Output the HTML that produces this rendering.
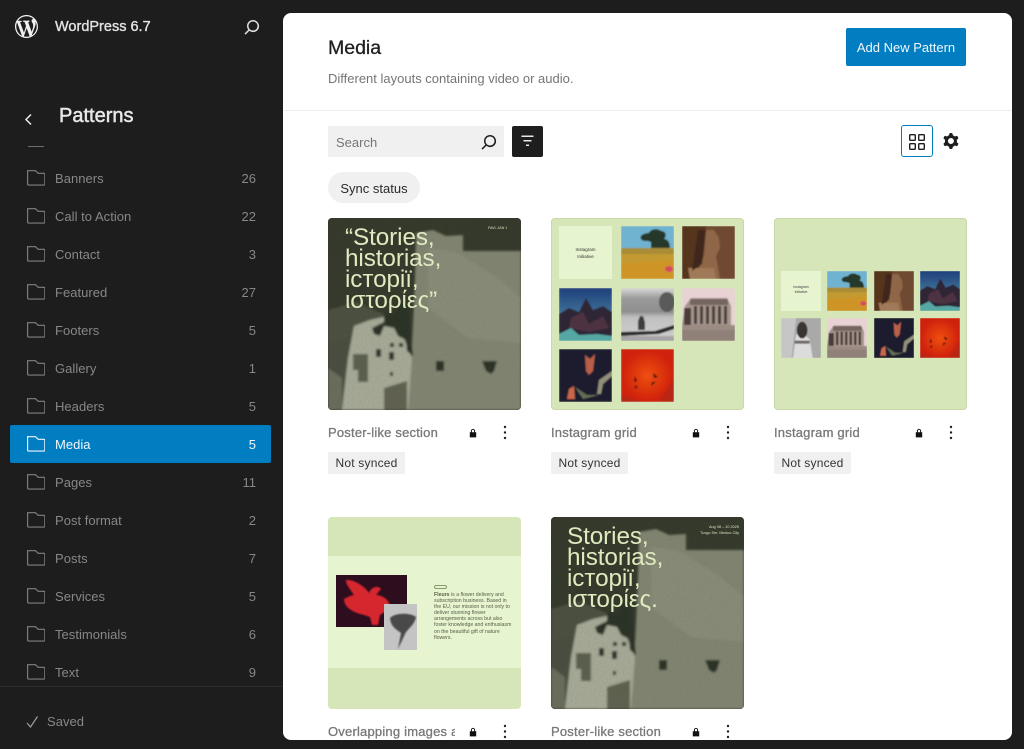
<!DOCTYPE html>
<html lang="en"><head><meta charset="utf-8"><title>Patterns</title>
<style>
html,body{margin:0;padding:0;width:1024px;height:749px;overflow:hidden;background:#1d1d1d;font-family:"Liberation Sans",sans-serif}
div,span,svg{position:absolute;display:block}
.t{white-space:nowrap;line-height:16px}
.side{font-size:13px;color:#878787;letter-spacing:.03px}
.cnt{font-size:13px;color:#878787;right:768px;text-align:right}
.lab{font-size:13px;color:#787878;letter-spacing:.2px;-webkit-text-stroke:.3px #787878;white-space:nowrap;line-height:16px}
.badge{background:#f0f0f0;height:22px;width:77px;border-radius:2px;font-size:12px;line-height:23px;color:#333;text-align:center;letter-spacing:.2px}
.card{border-radius:4px;overflow:hidden;width:192.5px;height:192px}
.ph{color:#dfeabf;font-size:24.3px;line-height:21px;letter-spacing:-.1px;white-space:nowrap}
</style></head><body>
<svg width="0" height="0" style="position:absolute">
<defs>
<filter id="b" x="-10%" y="-10%" width="120%" height="120%"><feGaussianBlur stdDeviation=".8"/></filter>
<filter id="bp" x="-5%" y="-5%" width="110%" height="110%"><feGaussianBlur stdDeviation="1.100"/></filter>
<filter id="nz" x="0" y="0" width="100%" height="100%"><feTurbulence type="fractalNoise" baseFrequency=".5" numOctaves="2" seed="4"/><feColorMatrix type="matrix" values="0 0 0 0 .12  0 0 0 0 .13  0 0 0 0 .09  0 0 0 2 -.9"/></filter>
<g id="fo"><path d="M.7.7h9l3 2.900h6.600a1 1 0 0 1 1 1V16a1 1 0 0 1-1 1H1.700a1 1 0 0 1-1-1z" fill="none" stroke="currentColor" stroke-width="1.300"/></g>
<g id="lk"><path d="M1 5h8v6.500H1z M2.400 5V3.400a2.600 2.600 0 0 1 5.200 0V5H6.400V3.400a1.400 1.400 0 0 0-2.800 0V5z" fill="#111"/></g>
<g id="dt" fill="#222"><circle cx="2" cy="2" r="1.200"/><circle cx="2" cy="7.500" r="1.200"/><circle cx="2" cy="13" r="1.200"/></g>
<symbol id="poster" viewBox="0 0 193 192">
<rect width="193" height="192" fill="#34392b"/>
<g filter="url(#bp)">
<path d="M0 92 28 84 60 98 60 125 0 125z" fill="#4b5040"/>
<path d="M88 15 105 12 118 18 135 17 135 33 193 33 193 192 78 192 84 130 87 60z" fill="#7f8370"/>
<path d="M100 30 128 34 170 60 193 80 193 125 140 120 100 90z" fill="#868a76"/>
<path d="M0 125 24 118 24 192 0 192z" fill="#4a4e3f"/>
<path d="M26 108 42 102 60 98 60 108 72 110 78 125 84 140 80 192 14 192 20 140z" fill="#a4a895"/>
<path d="M44 110 56 104 56 96 68 96 68 88 80 84 85 138 79 133 78 122 70 118 66 110 56 108 52 118 46 116z" fill="#2c3025"/>
<path d="M25 136h15v28H30v-12h-5z" fill="#5a5e4d"/>
<path d="M48 131h5v8h-5zM61 134h5v8h-5zM62 125h4v4h-4zM71 125h4v4h-4zM62 154h3v4h-3z" fill="#2f3328"/>
<path d="M56 170 79 163 79 192 56 192z" fill="#5e6150"/>
<path d="M108 143h8v10h-8zM154 143h15l-3 10-3 3-5-3z" fill="#2c3025"/>
<path d="M0 150 14 160 14 192 0 192z" fill="#686c5a"/>
</g>
<rect width="193" height="192" filter="url(#nz)" opacity=".14"/>
</symbol>
<symbol id="tree" viewBox="0 0 53 53"><g filter="url(#b)"><rect width="53" height="24" fill="#70b3d0"/><rect y="22" width="53" height="31" fill="#c39a33"/><path d="M0 22H53V28H0z" fill="#a98c34"/><path d="M0 38 53 34V53H0z" fill="#cf9425"/><path d="M20 13c-2-4 4-6 8-6 1-4 9-5 12-2 5 0 6 5 3 8 4 0 6 4 6 9H30v-6l-3-1c-3 0-6 0-7-2z" fill="#26392c"/><ellipse cx="48" cy="43" rx="4" ry="3" fill="#d64a60"/></g></symbol>
<symbol id="face" viewBox="0 0 53 53"><g filter="url(#b)"><rect width="53" height="53" fill="#6f4a30"/><path d="M0 0H24L18 53H0z" fill="#54351f"/><path d="M24 4 32 4 37 12 38 22 34 30 38 53H12L22 30z" fill="#8f6647"/><path d="M6 42 32 42 34 53H8z" fill="#a07a58"/><path d="M16 4 24 4 20 38 10 45z" fill="#40281a"/></g></symbol>
<symbol id="coral" viewBox="0 0 53 53"><defs><linearGradient id="cg" x1="0" y1="0" x2="0" y2="1"><stop offset="0" stop-color="#1f3f7b"/><stop offset=".5" stop-color="#3f7298"/></linearGradient></defs><g filter="url(#b)"><rect width="53" height="53" fill="url(#cg)"/><path d="M0 26 10 20 20 24 27 10 34 22 44 18 53 24V53H0z" fill="#2f2535"/><path d="M12 30 24 24 30 36 44 28 50 40 30 44 10 40z" fill="#4d3043"/><path d="M0 53V46L12 40 20 47 38 46 53 48V53z" fill="#54a7a4"/></g></symbol>
<symbol id="boat" viewBox="0 0 53 53"><defs><linearGradient id="bg" x1="0" y1="0" x2="0" y2="1"><stop offset="0" stop-color="#d8d8d8"/><stop offset=".2" stop-color="#9a9a9a"/><stop offset=".45" stop-color="#8e8e8e"/><stop offset=".55" stop-color="#c0c0c0"/><stop offset="1" stop-color="#cfcfcf"/></linearGradient></defs><g filter="url(#b)"><rect width="53" height="53" fill="url(#bg)"/><ellipse cx="46" cy="14" rx="8" ry="10" fill="#5a5a5a"/><path d="M0 44 34 43 53 37V41L38 46 0 48z" fill="#2c2c2c"/><path d="M17 42V33l2-5h3l2 6v8z" fill="#3c3c3c"/><rect y="48" width="53" height="5" fill="#a5a5a5"/></g></symbol>
<symbol id="temple" viewBox="0 0 53 53"><g filter="url(#b)"><rect width="53" height="53" fill="#e8d2d4"/><rect y="37" width="53" height="16" fill="#9c8b83"/><path d="M0 36 3 18 9 10H45L49 18V37H0z" fill="#a5948c"/><path d="M8 11H46V17H8z" fill="#75655f"/><path d="M2 20H9V37H2zM12 18h3V36h-3zM18 18h3V36h-3zM24 18h3V36h-3zM30 18h3V36h-3zM36 18h3V36h-3zM42 18h3V36h-3z" fill="#4a3e3a"/><path d="M0 42H53V53H0z" fill="#8f8078"/></g></symbol>
<symbol id="flower" viewBox="0 0 53 53"><g filter="url(#b)"><rect width="53" height="53" fill="#1d1a2e"/><path d="M26 6 31 10 36 5 34 22 30 26 27 22z" fill="#b85f48"/><path d="M40 31 53 22V27L44 35 42 45 38 45z" fill="#928f78"/><path d="M8 50 10 40 15 37 16 50z" fill="#c9674a"/><path d="M16 38 28 46 40 46 24 50z" fill="#626d52"/></g></symbol>
<symbol id="red" viewBox="0 0 53 53"><defs><radialGradient id="rg"><stop offset="0" stop-color="#ee4f12"/><stop offset="1" stop-color="#cf200e"/></radialGradient></defs><g filter="url(#b)"><rect width="53" height="53" fill="url(#rg)"/><path d="M14 27l2 5-3 1zM32 24l5 4-4 1zM14 36l3 2-3 2zM35 33l-5 4 1-4z" fill="#3a1210"/><path d="M38 53 53 30V53zM0 45 20 53H0z" fill="#b92512"/></g></symbol>
<symbol id="woman" viewBox="0 0 53 53"><g filter="url(#b)"><rect width="53" height="53" fill="#a9a9a9"/><path d="M0 0H20L14 53H0z" fill="#c6c6c6"/><path d="M16 53 20 22 28 20 38 28 42 53z" fill="#dcdcdc"/><ellipse cx="28" cy="16" rx="7" ry="11" fill="#3b3531"/><path d="M18 30h20v4H18z" fill="#6e6a66"/></g></symbol>
</defs></svg>

<!-- sidebar -->
<svg style="left:15px;top:15px" width="23" height="23" viewBox="0 0 20 20"><path fill="#f0f0f0" d="M20 10c0-5.510-4.490-10-10-10C4.480 0 0 4.490 0 10c0 5.520 4.480 10 10 10 5.510 0 10-4.480 10-10zM7.780 15.370L4.370 6.220c.55-.02 1.170-.08 1.170-.08.5-.06.44-1.130-.06-1.110 0 0-1.450.11-2.370.11-.18 0-.37 0-.58-.01C4.120 2.690 6.870 1.110 10 1.110c2.330 0 4.450.87 6.050 2.340-.68-.11-1.650.39-1.650 1.580 0 .74.45 1.360.9 2.100.35.61.55 1.360.55 2.460 0 1.490-1.400 5-1.400 5l-3.030-8.370c.54-.02.82-.17.82-.17.5-.05.44-1.250-.06-1.220 0 0-1.440.12-2.380.12-.87 0-2.330-.12-2.330-.12-.5-.03-.56 1.200-.06 1.220l.92.08 1.260 3.410zM17.410 10c.24-.64.74-1.870.43-4.250.7 1.290 1.050 2.710 1.050 4.250 0 3.290-1.730 6.240-4.400 7.780.97-2.590 1.940-5.200 2.920-7.780zM6.100 18.090C3.120 16.650 1.110 13.530 1.110 10c0-1.300.23-2.480.72-3.590C3.250 10.300 4.670 14.200 6.100 18.090zm4.030-6.630l2.580 6.980c-.86.29-1.760.45-2.710.45-.79 0-1.570-.11-2.290-.33.81-2.380 1.620-4.740 2.420-7.100z"/></svg>
<div class="t" style="left:55px;top:19px;font-size:14.500px;color:#e4e4e4;-webkit-text-stroke:.35px #e4e4e4">WordPress 6.7</div>
<svg style="left:240px;top:15px" width="24" height="24" viewBox="0 0 24 24"><path fill="#e0e0e0" d="M13 5c-3.300 0-6 2.700-6 6 0 1.400.5 2.700 1.300 3.700l-3.800 3.800 1.100 1.100 3.800-3.800c1 .8 2.300 1.300 3.700 1.300 3.300 0 6-2.700 6-6S16.300 5 13 5zm0 10.500c-2.500 0-4.500-2-4.500-4.500s2-4.500 4.500-4.500 4.500 2 4.500 4.500-2 4.500-4.500 4.500z"/></svg>
<svg style="left:22px;top:111px" width="12" height="16" viewBox="0 0 12 16"><path d="M9 3.500 4 8.500l5 5" fill="none" stroke="#e8e8e8" stroke-width="1.500"/></svg>
<div class="t" style="left:59px;top:105px;font-size:20px;line-height:22px;color:#e8e8e8;-webkit-text-stroke:.5px #e8e8e8">Patterns</div>
<div style="left:28px;top:146px;width:16px;height:1px;background:#6f6f6f"></div>

<svg style="left:27px;top:170px;color:#808080" width="18" height="16" viewBox="0 0 20.500 18"><use href="#fo"/></svg><div class="t side" style="left:55px;top:171px">Banners</div><div class="t cnt" style="top:171px">26</div>
<svg style="left:27px;top:208px;color:#808080" width="18" height="16" viewBox="0 0 20.500 18"><use href="#fo"/></svg><div class="t side" style="left:55px;top:209px">Call to Action</div><div class="t cnt" style="top:209px">22</div>
<svg style="left:27px;top:246px;color:#808080" width="18" height="16" viewBox="0 0 20.500 18"><use href="#fo"/></svg><div class="t side" style="left:55px;top:247px">Contact</div><div class="t cnt" style="top:247px">3</div>
<svg style="left:27px;top:284px;color:#808080" width="18" height="16" viewBox="0 0 20.500 18"><use href="#fo"/></svg><div class="t side" style="left:55px;top:285px">Featured</div><div class="t cnt" style="top:285px">27</div>
<svg style="left:27px;top:322px;color:#808080" width="18" height="16" viewBox="0 0 20.500 18"><use href="#fo"/></svg><div class="t side" style="left:55px;top:323px">Footers</div><div class="t cnt" style="top:323px">5</div>
<svg style="left:27px;top:360px;color:#808080" width="18" height="16" viewBox="0 0 20.500 18"><use href="#fo"/></svg><div class="t side" style="left:55px;top:361px">Gallery</div><div class="t cnt" style="top:361px">1</div>
<svg style="left:27px;top:398px;color:#808080" width="18" height="16" viewBox="0 0 20.500 18"><use href="#fo"/></svg><div class="t side" style="left:55px;top:399px">Headers</div><div class="t cnt" style="top:399px">5</div>
<div style="left:10px;top:425px;width:261px;height:38px;background:#017dc2;border-radius:2px"></div>
<svg style="left:27px;top:436px;color:#f2f8fc" width="18" height="16" viewBox="0 0 20.500 18"><use href="#fo"/></svg><div class="t side" style="left:55px;top:437px;color:#f2f8fc">Media</div><div class="t cnt" style="top:437px;color:#f2f8fc">5</div>
<svg style="left:27px;top:474px;color:#808080" width="18" height="16" viewBox="0 0 20.500 18"><use href="#fo"/></svg><div class="t side" style="left:55px;top:475px">Pages</div><div class="t cnt" style="top:475px">11</div>
<svg style="left:27px;top:512px;color:#808080" width="18" height="16" viewBox="0 0 20.500 18"><use href="#fo"/></svg><div class="t side" style="left:55px;top:513px">Post format</div><div class="t cnt" style="top:513px">2</div>
<svg style="left:27px;top:550px;color:#808080" width="18" height="16" viewBox="0 0 20.500 18"><use href="#fo"/></svg><div class="t side" style="left:55px;top:551px">Posts</div><div class="t cnt" style="top:551px">7</div>
<svg style="left:27px;top:588px;color:#808080" width="18" height="16" viewBox="0 0 20.500 18"><use href="#fo"/></svg><div class="t side" style="left:55px;top:589px">Services</div><div class="t cnt" style="top:589px">5</div>
<svg style="left:27px;top:626px;color:#808080" width="18" height="16" viewBox="0 0 20.500 18"><use href="#fo"/></svg><div class="t side" style="left:55px;top:627px">Testimonials</div><div class="t cnt" style="top:627px">6</div>
<svg style="left:27px;top:664px;color:#808080" width="18" height="16" viewBox="0 0 20.500 18"><use href="#fo"/></svg><div class="t side" style="left:55px;top:665px">Text</div><div class="t cnt" style="top:665px">9</div>
<div style="left:0;top:686px;width:283px;height:1px;background:#2c2c2c"></div>
<svg style="left:26px;top:715px" width="13" height="14" viewBox="0 0 13 14"><path d="M1 8 4.500 12 11.500 1.500" fill="none" stroke="#a0a0a0" stroke-width="1.200"/></svg>
<div class="t side" style="left:47px;top:714px">Saved</div>

<!-- panel -->
<div style="left:283px;top:13px;width:729px;height:727px;background:#fff;border-radius:8px;overflow:hidden"></div>
<div class="t" style="left:328px;top:37px;font-size:19.500px;line-height:22px;color:#1e1e1e;-webkit-text-stroke:.3px #1e1e1e">Media</div>
<div class="t" style="left:328px;top:71px;font-size:13px;color:#757575">Different layouts containing video or audio.</div>
<div class="t" style="left:846px;top:28px;width:120px;height:38px;line-height:40px;background:#017dc2;border-radius:2px;color:#f2f8fc;font-size:13px;text-align:center;overflow:hidden">Add New Pattern</div>
<div style="left:283px;top:110px;width:729px;height:1px;background:#eeeeee"></div>

<div class="t" style="left:328px;top:126px;width:176px;height:31px;background:#f0f0f0;border-radius:2px;line-height:33px;font-size:13px;color:#757575;text-indent:8px;overflow:hidden">Search</div>
<svg style="left:477px;top:130px" width="24" height="24" viewBox="0 0 24 24"><path fill="#1e1e1e" d="M13 5c-3.300 0-6 2.700-6 6 0 1.400.5 2.700 1.300 3.700l-3.800 3.800 1.100 1.100 3.800-3.800c1 .8 2.300 1.300 3.700 1.300 3.300 0 6-2.700 6-6S16.300 5 13 5zm0 10.500c-2.500 0-4.500-2-4.500-4.500s2-4.500 4.500-4.500 4.500 2 4.500 4.500-2 4.500-4.500 4.500z"/></svg>
<div style="left:512px;top:126px;width:31px;height:31px;background:#1e1e1e;border-radius:2px"></div>
<svg style="left:512px;top:126px" width="31" height="31" viewBox="0 0 31 31"><path d="M9.500 9.500h12V11h-12zM11.500 14h8v1.500h-8zM14 18.500h3V20h-3z" fill="#e8e8e8"/></svg>
<div style="left:900.500px;top:125px;width:30px;height:30px;border:1.500px solid #017dc2;border-radius:3px"></div>
<svg style="left:908px;top:133px" width="18" height="18" viewBox="0 0 18 18"><g fill="none" stroke="#1e1e1e" stroke-width="1.400"><rect x="1.700" y="1.700" width="5.600" height="5.600" rx=".8"/><rect x="10.700" y="1.700" width="5.600" height="5.600" rx=".8"/><rect x="1.700" y="10.700" width="5.600" height="5.600" rx=".8"/><rect x="10.700" y="10.700" width="5.600" height="5.600" rx=".8"/></g></svg>
<svg style="left:939px;top:129px" width="24" height="24" viewBox="0 0 24 24"><path fill="#1e1e1e" fill-rule="evenodd" d="M10.289 4.836A1 1 0 0 1 11.275 4h1.306a1 1 0 0 1 .987.836l.244 1.466c.787.26 1.503.679 2.108 1.218l1.393-.522a1 1 0 0 1 1.216.437l.653 1.130a1 1 0 0 1-.23 1.273l-1.148.944a6.025 6.025 0 0 1 0 2.435l1.149.946a1 1 0 0 1 .23 1.272l-.653 1.130a1 1 0 0 1-1.216.437l-1.394-.522c-.605.54-1.320.958-2.108 1.218l-.244 1.466a1 1 0 0 1-.987.836h-1.306a1 1 0 0 1-.986-.836l-.244-1.466a5.995 5.995 0 0 1-2.108-1.218l-1.394.522a1 1 0 0 1-1.217-.436l-.653-1.131a1 1 0 0 1 .23-1.272l1.149-.946a6.026 6.026 0 0 1 0-2.435l-1.148-.944a1 1 0 0 1-.23-1.272l.653-1.131a1 1 0 0 1 1.217-.437l1.393.522a5.994 5.994 0 0 1 2.108-1.218l.244-1.466zM14.929 12a3 3 0 1 1-6 0 3 3 0 0 1 6 0z"/></svg>
<div class="t" style="left:328px;top:172px;width:92px;height:31px;line-height:33px;border-radius:16px;background:#f0f0f0;color:#2a2a2a;font-size:13px;text-align:center;overflow:hidden">Sync status</div>

<!-- card 1 -->
<div class="card" style="left:328px;top:218px;background:#34392b">
<svg style="left:0;top:0" width="193" height="192"><use href="#poster"/></svg>
<div class="ph" style="left:17px;top:9px">“Stories,<br>historias,<br>історії,<br>ιστορίες”</div>
<div class="t" style="left:160px;top:2px;font-size:3.600px;color:#d8e4bf">FAVL JAN 1</div>
</div>
<div class="lab" style="left:328px;top:425px">Poster-like section</div>
<svg style="left:469px;top:428px" width="8" height="10" viewBox="0 0 10 12"><use href="#lk"/></svg>
<svg style="left:503px;top:425px" width="4" height="16" viewBox="0 0 4 16"><use href="#dt"/></svg>
<div class="badge" style="left:328px;top:452px">Not synced</div>

<!-- card 2 -->
<div class="card" style="left:551px;top:218px;background:#d7e6b8;box-shadow:inset 0 0 0 1px #c7d9a6">
<div style="left:8px;top:8px;width:53px;height:53px;background:#e6f4cf"></div>
<div class="t" style="left:8px;top:28px;width:53px;text-align:center;font-size:4.500px;line-height:7px;color:#333">Instagram<br>Initiative</div>
<svg style="left:70px;top:8px" width="53" height="53"><use href="#tree"/></svg>
<svg style="left:131px;top:8px" width="53" height="53"><use href="#face"/></svg>
<svg style="left:8px;top:70px" width="53" height="53"><use href="#coral"/></svg>
<svg style="left:70px;top:70px" width="53" height="53"><use href="#boat"/></svg>
<svg style="left:131px;top:70px" width="53" height="53"><use href="#temple"/></svg>
<svg style="left:8px;top:131px" width="53" height="53"><use href="#flower"/></svg>
<svg style="left:70px;top:131px" width="53" height="53"><use href="#red"/></svg>
</div>
<div class="lab" style="left:551px;top:425px">Instagram grid</div>
<svg style="left:692px;top:428px" width="8" height="10" viewBox="0 0 10 12"><use href="#lk"/></svg>
<svg style="left:726px;top:425px" width="4" height="16" viewBox="0 0 4 16"><use href="#dt"/></svg>
<div class="badge" style="left:551px;top:452px">Not synced</div>

<!-- card 3 -->
<div class="card" style="left:774px;top:218px;background:#d7e6b8;box-shadow:inset 0 0 0 1px #c7d9a6">
<div style="left:7px;top:53px;width:40px;height:40px;background:#e6f4cf"></div>
<div class="t" style="left:7px;top:67px;width:40px;text-align:center;font-size:3.500px;line-height:5px;color:#444">Instagram<br>Initiative</div>
<svg style="left:53px;top:53px" width="40" height="40"><use href="#tree"/></svg>
<svg style="left:100px;top:53px" width="40" height="40"><use href="#face"/></svg>
<svg style="left:146px;top:53px" width="40" height="40"><use href="#coral"/></svg>
<svg style="left:7px;top:100px" width="40" height="40"><use href="#woman"/></svg>
<svg style="left:53px;top:100px" width="40" height="40"><use href="#temple"/></svg>
<svg style="left:100px;top:100px" width="40" height="40"><use href="#flower"/></svg>
<svg style="left:146px;top:100px" width="40" height="40"><use href="#red"/></svg>
</div>
<div class="lab" style="left:774px;top:425px">Instagram grid</div>
<svg style="left:915px;top:428px" width="8" height="10" viewBox="0 0 10 12"><use href="#lk"/></svg>
<svg style="left:949px;top:425px" width="4" height="16" viewBox="0 0 4 16"><use href="#dt"/></svg>
<div class="badge" style="left:774px;top:452px">Not synced</div>

<!-- card 4 -->
<div class="card" style="left:328px;top:517px;background:#d7e6b8">
<div style="left:0;top:39px;width:193px;height:112px;background:#e6f4cf"></div>
<svg style="left:8px;top:58px" width="71" height="52" viewBox="0 0 71 52"><rect width="71" height="52" fill="#2d0d1e"/><g filter="url(#b)"><path d="M10 5C16 4 28 10 33 18 35 12 42 10 45 14L40 20C46 20 52 24 54 30L50 36 44 40 42 50 36 50 34 42 28 40C20 38 8 34 8 24 12 22 16 20 18 20 14 14 10 10 10 5z" fill="#d6252e"/></g></svg>
<svg style="left:56px;top:87px" width="33" height="46" viewBox="0 0 33 46"><rect width="33" height="46" fill="#c4c4c4"/><g filter="url(#b)"><path d="M6 14C10 9 26 8 32 13 30 22 24 24 21 30L14 45 17 29C12 25 7 23 6 14z" fill="#4a4a4a"/></g></svg>
<div style="left:106px;top:68px;width:13px;height:4px;border:.5px solid #8a9a70;border-radius:3px;box-sizing:border-box"></div>
<div class="t" style="left:106px;top:75px;font-size:5.200px;line-height:6.100px;color:#56604a"><b>Fleurs</b> is a flower delivery and<br>subscription business. Based in<br>the EU, our mission is not only to<br>deliver stunning flower<br>arrangements across but also<br>foster knowledge and enthusiasm<br>on the beautiful gift of nature<br>flowers.</div>
</div>
<div class="lab" style="left:328px;top:724px;width:127px;height:16px;overflow:hidden">Overlapping images and text</div>
<svg style="left:469px;top:727px" width="8" height="10" viewBox="0 0 10 12"><use href="#lk"/></svg>
<div style="left:500px;top:723px;width:10px;height:17px;overflow:hidden"><svg style="left:3px;top:1px" width="4" height="16" viewBox="0 0 4 16"><use href="#dt"/></svg></div>

<!-- card 5 -->
<div class="card" style="left:551px;top:517px;background:#34392b">
<svg style="left:0;top:0" width="193" height="192"><use href="#poster"/></svg>
<div class="ph" style="left:16px;top:9px">Stories,<br>historias,<br>історії,<br>ιστορίες.</div>
<div class="t" style="left:139px;top:7px;width:49px;text-align:right;font-size:3.800px;line-height:6px;color:#d8e4bf">Aug 08 – 10 2025<br>Tuxgo Ser, Mexico City</div>
</div>
<div class="lab" style="left:551px;top:724px">Poster-like section</div>
<svg style="left:692px;top:727px" width="8" height="10" viewBox="0 0 10 12"><use href="#lk"/></svg>
<div style="left:723px;top:723px;width:10px;height:17px;overflow:hidden"><svg style="left:3px;top:1px" width="4" height="16" viewBox="0 0 4 16"><use href="#dt"/></svg></div>
</body></html>
